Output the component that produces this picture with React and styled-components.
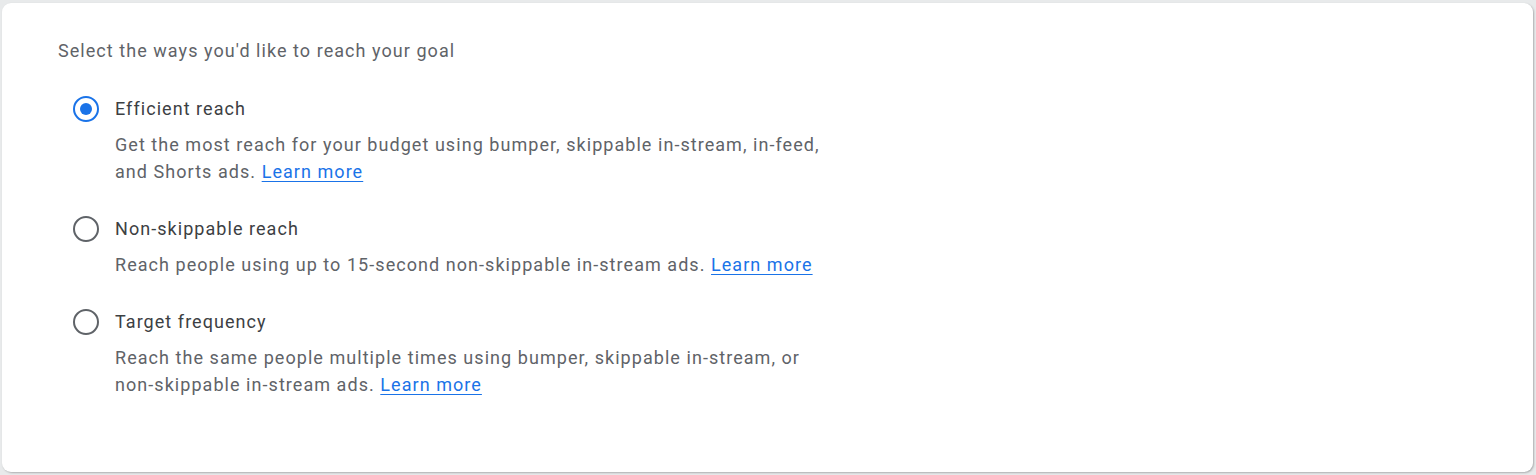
import React, { useState } from "react";
import styled, { createGlobalStyle } from "styled-components";

const Global = createGlobalStyle`
  html, body { margin: 0; padding: 0; }
  body {
    background: #e8eaeb;
    font-family: Roboto, "Noto Sans", Arial, sans-serif;
    -webkit-font-smoothing: antialiased;
  }
`;

const Page = styled.div`
  padding: 3px 3px 3px 2px;
  height: 475px;
  box-sizing: border-box;
  display: flex;
`;

const Card = styled.section`
  flex: 1;
  background: #fff;
  border-radius: 9px;
  box-shadow: 1px 1px 2px rgba(60, 64, 67, 0.35);
  padding: 34px 56px;
  box-sizing: border-box;
  display: flex;
  flex-direction: column;
  gap: 31px;
`;

const Heading = styled.div`
  font-size: 18px;
  line-height: 27px;
  color: #5f6368;
  letter-spacing: 1.05px;
`;

const Options = styled.div`
  display: flex;
  flex-direction: column;
  gap: 30px;
  padding-left: 15px;
`;

const Option = styled.label`
  display: grid;
  grid-template-columns: 26px 1fr;
  column-gap: 16px;
  row-gap: 9px;
  cursor: pointer;
`;

const Radio = styled.span`
  width: 26px;
  height: 26px;
  box-sizing: border-box;
  border-radius: 50%;
  border: 2.6px solid ${(p) => (p.$checked ? "#1a73e8" : "#5f6368")};
  display: flex;
  align-items: center;
  justify-content: center;
  align-self: center;
  &::after {
    content: "";
    width: 12px;
    height: 12px;
    border-radius: 50%;
    background: #1a73e8;
    display: ${(p) => (p.$checked ? "block" : "none")};
  }
`;

const Title = styled.div`
  font-size: 18px;
  line-height: 27px;
  color: #3c4043;
  letter-spacing: 1.05px;
`;

const Desc = styled.div`
  grid-column: 2;
  font-size: 18px;
  line-height: 27px;
  color: #5f6368;
  letter-spacing: 1.05px;
  max-width: 712px;
`;

const NoWrap = styled.span`
  white-space: nowrap;
`;

const Link = styled.a`
  color: #1a73e8;
  text-decoration: underline;
  text-underline-offset: 3px;
  text-decoration-thickness: 1px;
  white-space: nowrap;
`;

const data = [
  {
    title: "Efficient reach",
    desc: ["Get the most reach for your budget using bumper, skippable in-stream, in-feed, and Shorts ads."],
  },
  {
    title: "Non-skippable reach",
    desc: ["Reach people using up to 15-second ", "non-skippable", " in-stream ads."],
  },
  {
    title: "Target frequency",
    desc: ["Reach the same people multiple times using bumper, skippable in-stream, or ", "non-skippable", " in-stream ads."],
  },
];

export default function App() {
  const [sel, setSel] = useState(0);
  return (
    <>
      <Global />
      <Page>
        <Card>
          <Heading>Select the ways you'd like to reach your goal</Heading>
          <Options>
            {data.map((d, i) => (
              <Option key={d.title} onClick={() => setSel(i)}>
                <Radio $checked={sel === i} />
                <Title>{d.title}</Title>
                <Desc>
                  {d.desc.map((part, j) =>
                    j % 2 === 1 ? <NoWrap key={j}>{part}</NoWrap> : <React.Fragment key={j}>{part}</React.Fragment>
                  )}{" "}
                  <Link href="#" onClick={(e) => e.preventDefault()}>Learn more</Link>
                </Desc>
              </Option>
            ))}
          </Options>
        </Card>
      </Page>
    </>
  );
}
